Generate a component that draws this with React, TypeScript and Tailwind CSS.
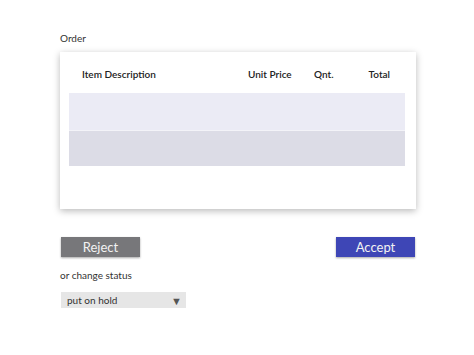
export default function App() {
  return (
    <div className="min-h-[355px] w-[474px] bg-white pl-[60px] pt-[31px] font-['Lato',sans-serif] text-[#333]">
      <div className="text-[10px] leading-[14px]">Order</div>

      <div className="mt-[7px] w-[356px] bg-white pb-[43px] pl-[9px] pr-[11px] shadow-[0_2px_7px_rgba(0,0,0,0.28)]">
        <div className="flex h-[41px] items-center pl-[13px] pr-[15px] pt-[3px] text-[10px] font-semibold text-[#222]">
          <div className="flex-1">Item Description</div>
          <div className="w-[66px]">Unit Price</div>
          <div className="w-[38px]">Qnt.</div>
          <div className="w-[38px] text-right">Total</div>
        </div>
        <div className="h-[37px] bg-[#ebebf5]" />
        <div className="h-[1px] bg-[#f3f3f8]" />
        <div className="h-[35px] bg-[#dcdce6]" />
      </div>

      <div className="mt-[28px] flex w-[355px] justify-between pl-[1px]">
        <button className="h-[20px] w-[79px] bg-[#77777a] text-[13px] leading-[20px] text-[#f2f2f2] shadow-[0_1px_2px_rgba(0,0,0,0.35)]">
          Reject
        </button>
        <button className="h-[20px] w-[79px] bg-[#3e46b6] text-[13px] leading-[20px] text-[#f2f2f2] shadow-[0_1px_2px_rgba(0,0,0,0.35)]">
          Accept
        </button>
      </div>

      <div className="mt-[11px] text-[10px] leading-[14px]">or change status</div>

      <div className="ml-[1px] mt-[10px] flex h-[16px] w-[125px] items-center justify-between bg-[#e6e6e6] pl-[6px] pr-[4px] text-[10px]">
        <span>put on hold</span>
        <span className="text-[11px] leading-[11px] text-[#555]">▼</span>
      </div>
    </div>
  );
}
